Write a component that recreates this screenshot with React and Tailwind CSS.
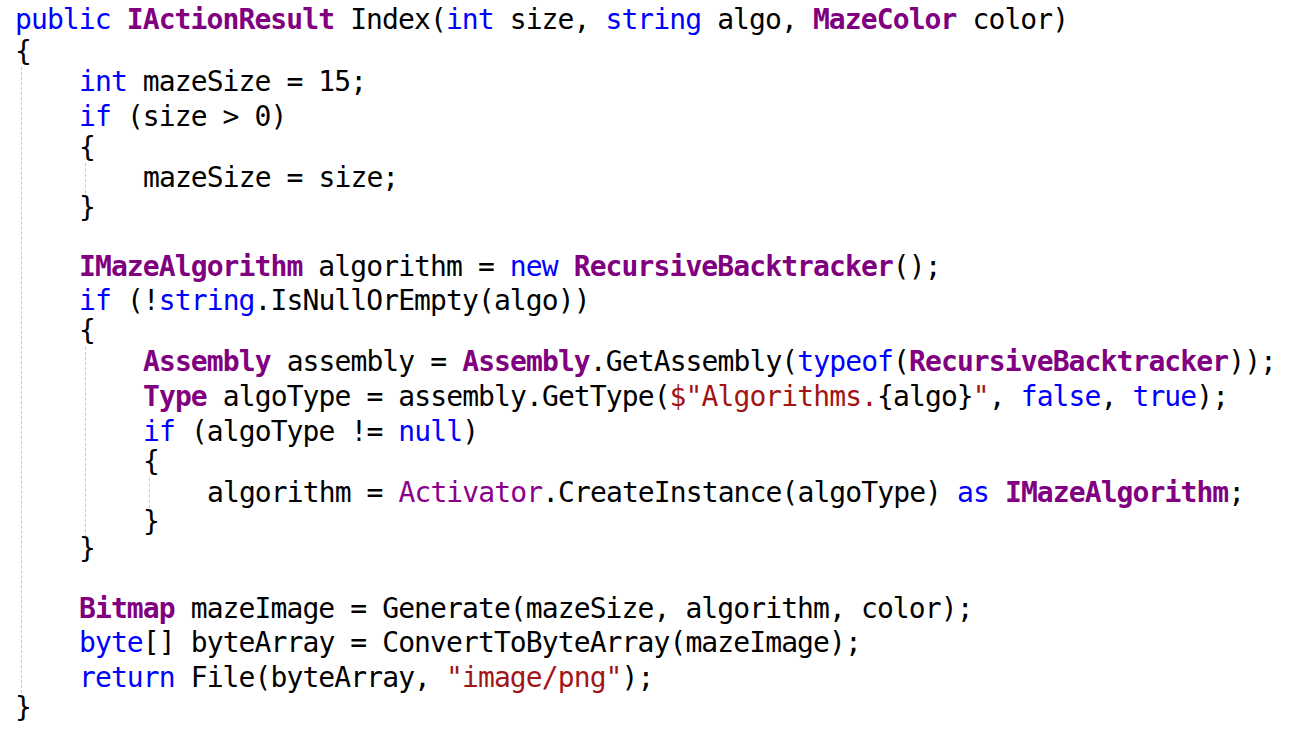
import React from 'react';

// token kinds -> tailwind classes
const K = {
  t: 'text-black',
  kw: 'text-[#0000ff]',
  ty: 'text-[#800080] font-bold',
  cl: 'text-[#8b008b]',
  st: 'text-[#a31515]',
};

const Line = ({ parts = [], mt = '' }) => (
  <div className={`h-[30px] leading-[30px] whitespace-pre ${mt}`}>
    {parts.map(([kind, text], i) => (
      <span key={i} className={K[kind]}>
        {text}
      </span>
    ))}
  </div>
);

// a block: "{" line, indented body with a dashed guide, "}" line
const Block = ({ children, openMt = '', closeMt = '' }) => (
  <div>
    <Line parts={[['t', '{']]} mt={openMt} />
    <div className="ml-[6px] border-l border-dashed border-[#c8c8c8] pl-[57px]">{children}</div>
    <Line parts={[['t', '}']]} mt={closeMt} />
  </div>
);

export default function App() {
  return (
    <div
      className="w-[1300px] h-[730px] bg-white overflow-hidden pl-[15px] pt-[5px] text-[28px] tracking-[-0.9px] text-black"
      style={{ fontFamily: '"DejaVu Sans Mono", "Liberation Mono", monospace' }}
    >
      <Line
        parts={[
          ['kw', 'public'],
          ['t', ' '],
          ['ty', 'IActionResult'],
          ['t', ' Index('],
          ['kw', 'int'],
          ['t', ' size, '],
          ['kw', 'string'],
          ['t', ' algo, '],
          ['ty', 'MazeColor'],
          ['t', ' color)'],
        ]}
      />
      <Block openMt="mt-[2px]">
        <Line parts={[['kw', 'int'], ['t', ' mazeSize = 15;']]} />
        <Line parts={[['kw', 'if'], ['t', ' (size > 0)']]} mt="mt-[5px]" />
        <Block openMt="mt-[1px]">
          <Line parts={[['t', 'mazeSize = size;']]} />
        </Block>
        <Line mt="-mt-[0.5px]" />
        <Line
          mt="-mt-[0.5px]"
          parts={[
            ['ty', 'IMazeAlgorithm'],
            ['t', ' algorithm = '],
            ['kw', 'new'],
            ['t', ' '],
            ['ty', 'RecursiveBacktracker'],
            ['t', '();'],
          ]}
        />
        <Line
          mt="mt-[4px]"
          parts={[['kw', 'if'], ['t', ' (!'], ['kw', 'string'], ['t', '.IsNullOrEmpty(algo))']]}
        />
        <Block closeMt="-mt-[3px]">
          <Line
            mt="mt-[1px]"
            parts={[
              ['ty', 'Assembly'],
              ['t', ' assembly = '],
              ['ty', 'Assembly'],
              ['t', '.GetAssembly('],
              ['kw', 'typeof'],
              ['t', '('],
              ['ty', 'RecursiveBacktracker'],
              ['t', '));'],
            ]}
          />
          <Line
            mt="mt-[5px]"
            parts={[
              ['ty', 'Type'],
              ['t', ' algoType = assembly.GetType('],
              ['st', '$"Algorithms.'],
              ['t', '{algo}'],
              ['st', '"'],
              ['t', ', '],
              ['kw', 'false'],
              ['t', ', '],
              ['kw', 'true'],
              ['t', ');'],
            ]}
          />
          <Line mt="mt-[5px]" parts={[['kw', 'if'], ['t', ' (algoType != '], ['kw', 'null'], ['t', ')']]} />
          <Block closeMt="-mt-[1px]">
            <Line
              mt="mt-[1px]"
              parts={[
                ['t', 'algorithm = '],
                ['cl', 'Activator'],
                ['t', '.CreateInstance(algoType) '],
                ['kw', 'as'],
                ['t', ' '],
                ['ty', 'IMazeAlgorithm'],
                ['t', ';'],
              ]}
            />
          </Block>
        </Block>
        <Line />
        <Line
          parts={[
            ['ty', 'Bitmap'],
            ['t', ' mazeImage = Generate(mazeSize, algorithm, color);'],
          ]}
        />
        <Line
          mt="mt-[4px]"
          parts={[['kw', 'byte'], ['t', '[] byteArray = ConvertToByteArray(mazeImage);']]}
        />
        <Line
          mt="mt-[5px]"
          parts={[['kw', 'return'], ['t', ' File(byteArray, '], ['st', '"image/png"'], ['t', ');']]}
        />
      </Block>
    </div>
  );
}
